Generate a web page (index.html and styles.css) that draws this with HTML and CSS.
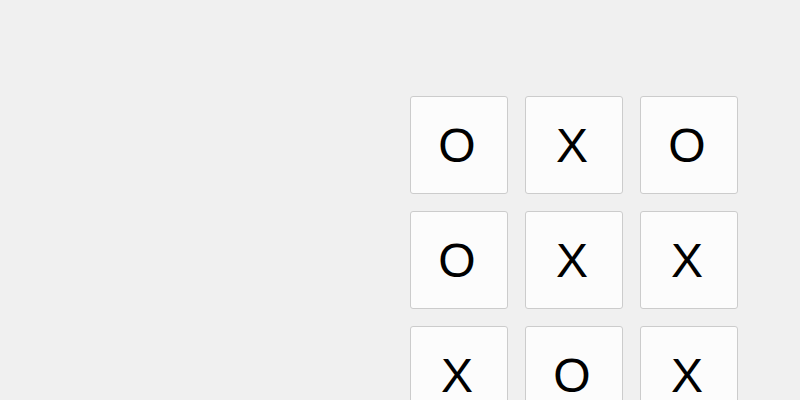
FILE: index.html
```html
<!DOCTYPE html>
<html lang="en">
<head>
  <meta charset="UTF-8" />
  <title>Tic Tac Toe</title>
  <link rel="stylesheet" href="styles.css">
</head>
<body>
  <div class="game">
    <div class="board">
      <div class="cell">O</div>
      <div class="cell">X</div>
      <div class="cell">O</div>
      <div class="cell">O</div>
      <div class="cell">X</div>
      <div class="cell">X</div>
      <div class="cell">X</div>
      <div class="cell">O</div>
      <div class="cell">X</div>
    </div>
  </div>
</body>
</html>
```

FILE: styles.css
```css
body {
  margin: 0;
  background-color: #f0f0f0;
  font-family: "Liberation Sans", Arial, sans-serif;
  overflow: hidden;
}

.game {
  padding: 96px 0 0 410px;
}

/* 3x3 board */
.board {
  display: grid;
  grid-template-columns: repeat(3, 98px);
  grid-auto-rows: 98px;
  gap: 17px;
}

.cell {
  box-sizing: border-box;
  background-color: #fcfcfc;
  border: 1px solid #cccccc;
  border-radius: 3px;
  display: flex;
  align-items: center;
  justify-content: center;
  padding-right: 4px;
  font-size: 48px;
  color: #000;
}
```
